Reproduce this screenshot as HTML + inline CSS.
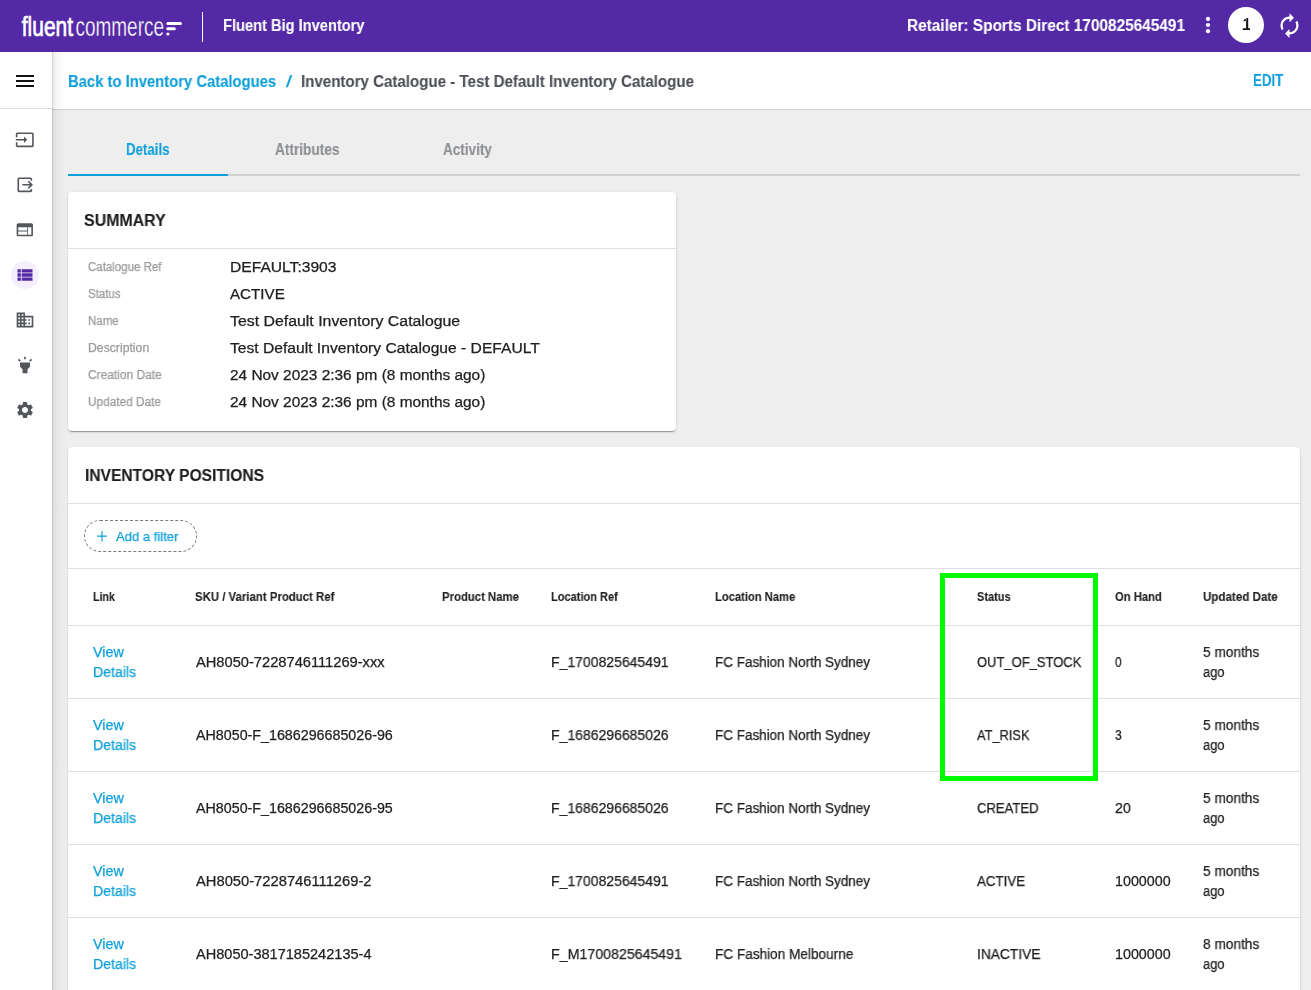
<!DOCTYPE html>
<html><head><meta charset="utf-8">
<style>
*{box-sizing:border-box}
html,body{margin:0;padding:0}
body{width:1311px;height:990px;overflow:hidden;position:relative;background:#eeeeee;font-family:"Liberation Sans",sans-serif}
.t{position:absolute;white-space:pre;transform-origin:0 0;display:block;will-change:transform}
#hdr{position:absolute;left:0;top:0;width:1311px;height:52px;background:#5429a6}
#side{position:absolute;left:0;top:52px;width:52px;height:938px;background:#fff;z-index:3}
#crumb{position:absolute;left:52px;top:52px;width:1259px;height:58px;background:#fff;border-bottom:1px solid #d4d4d4}
.card{position:absolute;background:#fff;border-radius:4px;box-shadow:0 2px 1px -1px rgba(0,0,0,.2),0 1px 1px 0 rgba(0,0,0,.14),0 1px 3px 0 rgba(0,0,0,.12)}
.hl{position:absolute;height:1px;background:#e0e0e0}
svg{position:absolute;overflow:visible}
</style></head><body>
<div id="hdr"></div>
<div id="crumb"></div>
<div id="side">
  <div style="position:absolute;left:0;top:56px;width:52px;height:1px;background:#e0e0e0"></div>
</div>
<!-- tabs underline -->
<div style="position:absolute;left:68px;top:174px;width:1232px;height:2px;background:#d0d0d0"></div>
<div style="position:absolute;left:68px;top:174px;width:160px;height:2px;background:#0e9fdb"></div>
<!-- summary card -->
<div class="card" style="left:68px;top:192px;width:608px;height:239px">
  <div class="hl" style="left:0;top:56px;width:608px"></div>
</div>
<!-- inventory card -->
<div class="card" style="left:68px;top:447px;width:1232px;height:600px">
  <div class="hl" style="left:0;top:56px;width:1232px"></div>
  <div class="hl" style="left:0;top:121px;width:1232px"></div>
  <div class="hl" style="left:0;top:178px;width:1232px"></div>
  <div class="hl" style="left:0;top:251px;width:1232px"></div>
  <div class="hl" style="left:0;top:324px;width:1232px"></div>
  <div class="hl" style="left:0;top:397px;width:1232px"></div>
  <div class="hl" style="left:0;top:470px;width:1232px"></div>
  <div style="position:absolute;left:16px;top:73px;width:113px;height:32px;border:1px dashed #7a7a7a;border-radius:16px"></div>
</div>

<div style="position:absolute;left:52px;top:52px;width:16px;height:938px;z-index:4;background:linear-gradient(to right,rgba(0,0,0,.17) 0px,rgba(0,0,0,.17) 1px,rgba(0,0,0,.07) 1.5px,rgba(0,0,0,.045) 4px,rgba(0,0,0,.02) 8px,rgba(0,0,0,0) 14px)"></div>
<!-- logo -->
<svg style="left:0;top:0" width="200" height="52" viewBox="0 0 200 52">
  <text x="21.8" y="36" fill="#fff" stroke="#fff" stroke-width="0.7" font-family="Liberation Sans" font-weight="400" font-size="27" textLength="51.3" lengthAdjust="spacingAndGlyphs">fluent</text>
  <text x="75.5" y="36" fill="#fff" font-family="Liberation Sans" font-weight="400" font-size="27" stroke="#5429a6" stroke-width="0.35" textLength="88.5" lengthAdjust="spacingAndGlyphs">commerce</text>
  <rect x="166.3" y="22" width="15.7" height="3" rx="1.5" fill="#fff"/>
  <rect x="166.3" y="27.2" width="9.5" height="3" rx="1.5" fill="#fff"/>
  <circle cx="167.9" cy="34" r="1.6" fill="#fff"/>
</svg>
<div style="position:absolute;left:202px;top:12px;width:1.2px;height:29.5px;background:#fff"></div>
<!-- kebab -->
<svg style="left:1200px;top:13px" width="16" height="24"><circle cx="8" cy="5.9" r="2.1" fill="#fff"/><circle cx="8" cy="12" r="2.1" fill="#fff"/><circle cx="8" cy="18.2" r="2.1" fill="#fff"/></svg>
<div style="position:absolute;left:1228px;top:7px;width:36px;height:36px;border-radius:50%;background:#fff"></div>
<svg style="left:0;top:0" width="1311" height="52"><path fill="#151515" d="M1246.1 18.1h2.1v10.5h-2.1z M1246.3 18.1l-3 2.3 0.8 1.2 2.6-1.6z M1242.8 28.3h7.2v1.7h-7.2z"/></svg>
<!-- sync -->
<svg style="left:1275.7px;top:12.1px" width="27" height="27" viewBox="0 0 24 24"><path fill="#fff" d="M12 6v3l4-4-4-4v3c-4.42 0-8 3.58-8 8 0 1.57.46 3.03 1.24 4.26L6.7 14.8c-.45-.83-.7-1.79-.7-2.8 0-3.31 2.69-6 6-6zm6.76 1.74L17.3 9.2c.44.84.7 1.79.7 2.8 0 3.31-2.69 6-6 6v-3l-4 4 4 4v-3c4.42 0 8-3.58 8-8 0-1.57-.46-3.03-1.24-4.26z"/></svg>
<!-- hamburger -->
<div style="position:absolute;left:16px;top:75px;width:18px;height:2px;background:#111;z-index:6"></div>
<div style="position:absolute;left:16px;top:80px;width:18px;height:2px;background:#111;z-index:6"></div>
<div style="position:absolute;left:16px;top:85px;width:18px;height:2px;background:#111;z-index:6"></div>
<!-- sidebar icons -->
<svg style="left:15.3px;top:130px;z-index:6" width="19.6" height="19.6" viewBox="0 0 24 24"><path fill="#53575c" d="M21 3.01H3c-1.1 0-2 .9-2 2V9h2V4.99h18v14.03H3V15H1v4.01c0 1.1.9 1.98 2 1.98h18c1.1 0 2-.88 2-1.98v-14c0-1.11-.9-2-2-2zM11 16l4-4-4-4v3H1v2h10v3z"/></svg>
<svg style="left:15.3px;top:175px;z-index:6" width="19.6" height="19.6" viewBox="0 0 24 24"><path fill="#53575c" d="M17 17l5-5-5-5-1.41 1.41L18.17 11H9v2h9.17l-2.58 2.59z M19 19H5V5h14v2h2V5c0-1.1-.89-2-2-2H5c-1.1 0-2 .9-2 2v14c0 1.1.9 2 2 2h14c1.11 0 2-.9 2-2v-2h-2v2z"/></svg>
<svg style="left:15.3px;top:220px;z-index:6" width="19.6" height="19.6" viewBox="0 0 24 24"><path fill="#53575c" d="M20 4H4c-1.1 0-1.99.9-1.99 2L2 18c0 1.1.9 2 2 2h16c1.1 0 2-.9 2-2V6c0-1.1-.9-2-2-2zm-5 14H4v-4h11v4zm0-5H4V9h11v4zm5 5h-4V9h4v9z"/></svg>
<div style="position:absolute;left:11px;top:261px;width:28px;height:28px;border-radius:50%;background:#f5eefd;z-index:6"></div>
<svg style="left:15px;top:265px;z-index:7" width="20" height="20" viewBox="0 0 24 24"><path fill="#5429a6" d="M3 14h4v-4H3v4zm0 5h4v-4H3v4zM3 9h4V5H3v4zm5 5h13v-4H8v4zm0 5h13v-4H8v4zM8 5v4h13V5H8z"/></svg>
<svg style="left:15px;top:310px;z-index:6" width="20" height="20" viewBox="0 0 24 24"><path fill="#53575c" d="M12 7V3H2v18h20V7H12zM6 19H4v-2h2v2zm0-4H4v-2h2v2zm0-4H4V9h2v2zm0-4H4V5h2v2zm4 12H8v-2h2v2zm0-4H8v-2h2v2zm0-4H8V9h2v2zm0-4H8V5h2v2zm10 12h-8v-2h2v-2h-2v-2h2v-2h-2V9h8v10zm-2-8h-2v2h2v-2zm0 4h-2v2h2v-2z"/></svg>
<svg style="left:15px;top:355px;z-index:6" width="20" height="20" viewBox="0 0 24 24"><path fill="#53575c" d="M6 14l3 3v5h6v-5l3-3V9H6zm5-12h2v3h-2zM3.5 5.875L4.914 4.46l2.12 2.122L5.62 7.997zm13.46.71l2.123-2.12 1.414 1.414L18.375 8z"/></svg>
<svg style="left:15px;top:400px;z-index:6" width="20" height="20" viewBox="0 0 24 24"><path fill="#53575c" d="M19.14 12.94c.04-.3.06-.61.06-.94 0-.32-.02-.64-.07-.94l2.03-1.58c.18-.14.23-.41.12-.61l-1.92-3.32c-.12-.22-.37-.29-.59-.22l-2.39.96c-.5-.38-1.03-.7-1.62-.94l-.36-2.54c-.04-.24-.24-.41-.48-.41h-3.84c-.24 0-.43.17-.47.41l-.36 2.54c-.59.24-1.13.57-1.62.94l-2.39-.96c-.22-.08-.47 0-.59.22L2.74 8.87c-.12.21-.08.47.12.61l2.03 1.58c-.05.3-.09.63-.09.94s.02.64.07.94l-2.03 1.58c-.18.14-.23.41-.12.61l1.92 3.32c.12.22.37.29.59.22l2.39-.96c.5.38 1.03.7 1.62.94l.36 2.54c.05.24.24.41.48.41h3.84c.24 0 .44-.17.47-.41l.36-2.54c.59-.24 1.13-.56 1.62-.94l2.39.96c.22.08.47 0 .59-.22l1.92-3.32c.12-.22.07-.47-.12-.61l-2.01-1.58zM12 15.6c-1.98 0-3.6-1.62-3.6-3.6s1.62-3.6 3.6-3.6 3.6 1.62 3.6 3.6-1.62 3.6-3.6 3.6z"/></svg>
<!-- filter plus -->
<svg style="left:0;top:520px;z-index:6" width="200" height="32"><path d="M97 16.2h10M102 11.2v10" stroke="#0e9fdb" stroke-width="1.2" fill="none"/></svg>
<span class=t style='left:223.0px;top:16.69px;font-size:16.32px;line-height:16.32px;font-weight:700;color:#fff;transform:scaleX(0.8973);-webkit-text-stroke:0.1px #fff'>Fluent Big Inventory</span>
<span class=t style='left:906.8px;top:16.99px;font-size:16.32px;line-height:16.32px;font-weight:700;color:#fff;transform:scaleX(0.9433);-webkit-text-stroke:0.1px #fff'>Retailer: Sports Direct 1700825645491</span>
<span class=t style='left:68.3px;top:72.79px;font-size:16.32px;line-height:16.32px;font-weight:700;color:#0e9fdb;transform:scaleX(0.9074);-webkit-text-stroke:0.1px #0e9fdb'>Back to Inventory Catalogues</span>
<span class=t style='left:285.6px;top:72.79px;font-size:16.32px;line-height:16.32px;font-weight:400;color:#0e9fdb;transform:scaleX(1.3416);-webkit-text-stroke:0.25px #0e9fdb'>/</span>
<span class=t style='left:300.5px;top:72.99px;font-size:16.32px;line-height:16.32px;font-weight:700;color:#4c5056;transform:scaleX(0.9251);-webkit-text-stroke:0.1px #4c5056'>Inventory Catalogue - Test Default Inventory Catalogue</span>
<span class=t style='left:1252.7px;top:72.39px;font-size:16.32px;line-height:16.32px;font-weight:700;color:#0e9fdb;transform:scaleX(0.8124);-webkit-text-stroke:0.1px #0e9fdb'>EDIT</span>
<span class=t style='left:125.8px;top:141.29px;font-size:16.32px;line-height:16.32px;font-weight:700;color:#0e9fdb;transform:scaleX(0.8131);-webkit-text-stroke:0.1px #0e9fdb'>Details</span>
<span class=t style='left:275.4px;top:141.29px;font-size:16.32px;line-height:16.32px;font-weight:700;color:#8b8e92;transform:scaleX(0.8360);-webkit-text-stroke:0.1px #8b8e92'>Attributes</span>
<span class=t style='left:443.0px;top:141.29px;font-size:16.32px;line-height:16.32px;font-weight:700;color:#8b8e92;transform:scaleX(0.8297);-webkit-text-stroke:0.1px #8b8e92'>Activity</span>
<span class=t style='left:83.8px;top:211.89px;font-size:16.32px;line-height:16.32px;font-weight:700;color:#1c1c1c;transform:scaleX(0.9774);-webkit-text-stroke:0.1px #1c1c1c'>SUMMARY</span>
<span class=t style='left:87.8px;top:261.34px;font-size:12.24px;line-height:12.24px;font-weight:400;color:#9a9a9a;transform:scaleX(0.9397);-webkit-text-stroke:0.25px #9a9a9a'>Catalogue Ref</span>
<span class=t style='left:230.0px;top:259.61px;font-size:14.28px;line-height:14.28px;font-weight:400;color:#212121;transform:scaleX(1.0949);-webkit-text-stroke:0.25px #212121'>DEFAULT:3903</span>
<span class=t style='left:87.8px;top:288.34px;font-size:12.24px;line-height:12.24px;font-weight:400;color:#9a9a9a;transform:scaleX(0.9398);-webkit-text-stroke:0.25px #9a9a9a'>Status</span>
<span class=t style='left:230.0px;top:286.61px;font-size:14.28px;line-height:14.28px;font-weight:400;color:#212121;transform:scaleX(1.0634);-webkit-text-stroke:0.25px #212121'>ACTIVE</span>
<span class=t style='left:87.8px;top:315.34px;font-size:12.24px;line-height:12.24px;font-weight:400;color:#9a9a9a;transform:scaleX(0.9405);-webkit-text-stroke:0.25px #9a9a9a'>Name</span>
<span class=t style='left:230.0px;top:313.61px;font-size:14.28px;line-height:14.28px;font-weight:400;color:#212121;transform:scaleX(1.1122);-webkit-text-stroke:0.25px #212121'>Test Default Inventory Catalogue</span>
<span class=t style='left:87.8px;top:342.34px;font-size:12.24px;line-height:12.24px;font-weight:400;color:#9a9a9a;transform:scaleX(0.9983);-webkit-text-stroke:0.25px #9a9a9a'>Description</span>
<span class=t style='left:230.0px;top:340.61px;font-size:14.28px;line-height:14.28px;font-weight:400;color:#212121;transform:scaleX(1.0955);-webkit-text-stroke:0.25px #212121'>Test Default Inventory Catalogue - DEFAULT</span>
<span class=t style='left:87.8px;top:369.34px;font-size:12.24px;line-height:12.24px;font-weight:400;color:#9a9a9a;transform:scaleX(0.9762);-webkit-text-stroke:0.25px #9a9a9a'>Creation Date</span>
<span class=t style='left:230.0px;top:367.61px;font-size:14.28px;line-height:14.28px;font-weight:400;color:#212121;transform:scaleX(1.0803);-webkit-text-stroke:0.25px #212121'>24 Nov 2023 2:36 pm (8 months ago)</span>
<span class=t style='left:87.8px;top:396.34px;font-size:12.24px;line-height:12.24px;font-weight:400;color:#9a9a9a;transform:scaleX(0.9656);-webkit-text-stroke:0.25px #9a9a9a'>Updated Date</span>
<span class=t style='left:230.0px;top:394.61px;font-size:14.28px;line-height:14.28px;font-weight:400;color:#212121;transform:scaleX(1.0803);-webkit-text-stroke:0.25px #212121'>24 Nov 2023 2:36 pm (8 months ago)</span>
<span class=t style='left:84.5px;top:467.19px;font-size:16.32px;line-height:16.32px;font-weight:700;color:#1c1c1c;transform:scaleX(0.9555);-webkit-text-stroke:0.1px #1c1c1c'>INVENTORY POSITIONS</span>
<span class=t style='left:115.5px;top:529.68px;font-size:13.26px;line-height:13.26px;font-weight:400;color:#0e9fdb;transform:scaleX(0.9851);-webkit-text-stroke:0.25px #0e9fdb'>Add a filter</span>
<span class=t style='left:92.9px;top:591.04px;font-size:12.24px;line-height:12.24px;font-weight:700;color:#212121;transform:scaleX(0.8706);-webkit-text-stroke:0.1px #212121'>Link</span>
<span class=t style='left:195.2px;top:591.04px;font-size:12.24px;line-height:12.24px;font-weight:700;color:#212121;transform:scaleX(0.9321);-webkit-text-stroke:0.1px #212121'>SKU / Variant Product Ref</span>
<span class=t style='left:441.7px;top:591.04px;font-size:12.24px;line-height:12.24px;font-weight:700;color:#212121;transform:scaleX(0.9270);-webkit-text-stroke:0.1px #212121'>Product Name</span>
<span class=t style='left:551.0px;top:591.04px;font-size:12.24px;line-height:12.24px;font-weight:700;color:#212121;transform:scaleX(0.9016);-webkit-text-stroke:0.1px #212121'>Location Ref</span>
<span class=t style='left:714.7px;top:591.04px;font-size:12.24px;line-height:12.24px;font-weight:700;color:#212121;transform:scaleX(0.9144);-webkit-text-stroke:0.1px #212121'>Location Name</span>
<span class=t style='left:977.1px;top:591.04px;font-size:12.24px;line-height:12.24px;font-weight:700;color:#212121;transform:scaleX(0.9013);-webkit-text-stroke:0.1px #212121'>Status</span>
<span class=t style='left:1114.5px;top:591.04px;font-size:12.24px;line-height:12.24px;font-weight:700;color:#212121;transform:scaleX(0.9179);-webkit-text-stroke:0.1px #212121'>On Hand</span>
<span class=t style='left:1203.3px;top:591.04px;font-size:12.24px;line-height:12.24px;font-weight:700;color:#212121;transform:scaleX(0.9473);-webkit-text-stroke:0.1px #212121'>Updated Date</span>
<span class=t style='left:92.7px;top:644.91px;font-size:14.28px;line-height:14.28px;font-weight:400;color:#0e9fdb;transform:scaleX(1.0042);-webkit-text-stroke:0.25px #0e9fdb'>View</span>
<span class=t style='left:92.7px;top:664.91px;font-size:14.28px;line-height:14.28px;font-weight:400;color:#0e9fdb;transform:scaleX(0.9860);-webkit-text-stroke:0.25px #0e9fdb'>Details</span>
<span class=t style='left:195.5px;top:654.91px;font-size:14.28px;line-height:14.28px;font-weight:400;color:#212121;transform:scaleX(1.0279);-webkit-text-stroke:0.25px #212121'>AH8050-7228746111269-xxx</span>
<span class=t style='left:551.2px;top:654.91px;font-size:14.28px;line-height:14.28px;font-weight:400;color:#212121;transform:scaleX(0.9817);-webkit-text-stroke:0.25px #212121'>F_1700825645491</span>
<span class=t style='left:714.5px;top:654.91px;font-size:14.28px;line-height:14.28px;font-weight:400;color:#212121;transform:scaleX(0.9444);-webkit-text-stroke:0.25px #212121'>FC Fashion North Sydney</span>
<span class=t style='left:976.9px;top:654.91px;font-size:14.28px;line-height:14.28px;font-weight:400;color:#212121;transform:scaleX(0.9103);-webkit-text-stroke:0.25px #212121'>OUT_OF_STOCK</span>
<span class=t style='left:1114.8px;top:654.91px;font-size:14.28px;line-height:14.28px;font-weight:400;color:#212121;transform:scaleX(0.8189);-webkit-text-stroke:0.25px #212121'>0</span>
<span class=t style='left:1203.1px;top:644.91px;font-size:14.28px;line-height:14.28px;font-weight:400;color:#212121;transform:scaleX(0.9593);-webkit-text-stroke:0.25px #212121'>5 months</span>
<span class=t style='left:1203.1px;top:664.91px;font-size:14.28px;line-height:14.28px;font-weight:400;color:#212121;transform:scaleX(0.9071);-webkit-text-stroke:0.25px #212121'>ago</span>
<span class=t style='left:92.7px;top:717.91px;font-size:14.28px;line-height:14.28px;font-weight:400;color:#0e9fdb;transform:scaleX(1.0042);-webkit-text-stroke:0.25px #0e9fdb'>View</span>
<span class=t style='left:92.7px;top:737.91px;font-size:14.28px;line-height:14.28px;font-weight:400;color:#0e9fdb;transform:scaleX(0.9860);-webkit-text-stroke:0.25px #0e9fdb'>Details</span>
<span class=t style='left:195.5px;top:727.91px;font-size:14.28px;line-height:14.28px;font-weight:400;color:#212121;transform:scaleX(1.0004);-webkit-text-stroke:0.25px #212121'>AH8050-F_1686296685026-96</span>
<span class=t style='left:551.2px;top:727.91px;font-size:14.28px;line-height:14.28px;font-weight:400;color:#212121;transform:scaleX(0.9817);-webkit-text-stroke:0.25px #212121'>F_1686296685026</span>
<span class=t style='left:714.5px;top:727.91px;font-size:14.28px;line-height:14.28px;font-weight:400;color:#212121;transform:scaleX(0.9444);-webkit-text-stroke:0.25px #212121'>FC Fashion North Sydney</span>
<span class=t style='left:976.9px;top:727.91px;font-size:14.28px;line-height:14.28px;font-weight:400;color:#212121;transform:scaleX(0.8989);-webkit-text-stroke:0.25px #212121'>AT_RISK</span>
<span class=t style='left:1114.8px;top:727.91px;font-size:14.28px;line-height:14.28px;font-weight:400;color:#212121;transform:scaleX(0.8441);-webkit-text-stroke:0.25px #212121'>3</span>
<span class=t style='left:1203.1px;top:717.91px;font-size:14.28px;line-height:14.28px;font-weight:400;color:#212121;transform:scaleX(0.9593);-webkit-text-stroke:0.25px #212121'>5 months</span>
<span class=t style='left:1203.1px;top:737.91px;font-size:14.28px;line-height:14.28px;font-weight:400;color:#212121;transform:scaleX(0.9071);-webkit-text-stroke:0.25px #212121'>ago</span>
<span class=t style='left:92.7px;top:790.91px;font-size:14.28px;line-height:14.28px;font-weight:400;color:#0e9fdb;transform:scaleX(1.0042);-webkit-text-stroke:0.25px #0e9fdb'>View</span>
<span class=t style='left:92.7px;top:810.91px;font-size:14.28px;line-height:14.28px;font-weight:400;color:#0e9fdb;transform:scaleX(0.9860);-webkit-text-stroke:0.25px #0e9fdb'>Details</span>
<span class=t style='left:195.5px;top:800.91px;font-size:14.28px;line-height:14.28px;font-weight:400;color:#212121;transform:scaleX(1.0004);-webkit-text-stroke:0.25px #212121'>AH8050-F_1686296685026-95</span>
<span class=t style='left:551.2px;top:800.91px;font-size:14.28px;line-height:14.28px;font-weight:400;color:#212121;transform:scaleX(0.9817);-webkit-text-stroke:0.25px #212121'>F_1686296685026</span>
<span class=t style='left:714.5px;top:800.91px;font-size:14.28px;line-height:14.28px;font-weight:400;color:#212121;transform:scaleX(0.9444);-webkit-text-stroke:0.25px #212121'>FC Fashion North Sydney</span>
<span class=t style='left:976.9px;top:800.91px;font-size:14.28px;line-height:14.28px;font-weight:400;color:#212121;transform:scaleX(0.9179);-webkit-text-stroke:0.25px #212121'>CREATED</span>
<span class=t style='left:1114.8px;top:800.91px;font-size:14.28px;line-height:14.28px;font-weight:400;color:#212121;transform:scaleX(0.9890);-webkit-text-stroke:0.25px #212121'>20</span>
<span class=t style='left:1203.1px;top:790.91px;font-size:14.28px;line-height:14.28px;font-weight:400;color:#212121;transform:scaleX(0.9593);-webkit-text-stroke:0.25px #212121'>5 months</span>
<span class=t style='left:1203.1px;top:810.91px;font-size:14.28px;line-height:14.28px;font-weight:400;color:#212121;transform:scaleX(0.9071);-webkit-text-stroke:0.25px #212121'>ago</span>
<span class=t style='left:92.7px;top:863.91px;font-size:14.28px;line-height:14.28px;font-weight:400;color:#0e9fdb;transform:scaleX(1.0042);-webkit-text-stroke:0.25px #0e9fdb'>View</span>
<span class=t style='left:92.7px;top:883.91px;font-size:14.28px;line-height:14.28px;font-weight:400;color:#0e9fdb;transform:scaleX(0.9860);-webkit-text-stroke:0.25px #0e9fdb'>Details</span>
<span class=t style='left:195.5px;top:873.91px;font-size:14.28px;line-height:14.28px;font-weight:400;color:#212121;transform:scaleX(1.0323);-webkit-text-stroke:0.25px #212121'>AH8050-7228746111269-2</span>
<span class=t style='left:551.2px;top:873.91px;font-size:14.28px;line-height:14.28px;font-weight:400;color:#212121;transform:scaleX(0.9817);-webkit-text-stroke:0.25px #212121'>F_1700825645491</span>
<span class=t style='left:714.5px;top:873.91px;font-size:14.28px;line-height:14.28px;font-weight:400;color:#212121;transform:scaleX(0.9444);-webkit-text-stroke:0.25px #212121'>FC Fashion North Sydney</span>
<span class=t style='left:976.9px;top:873.91px;font-size:14.28px;line-height:14.28px;font-weight:400;color:#212121;transform:scaleX(0.9334);-webkit-text-stroke:0.25px #212121'>ACTIVE</span>
<span class=t style='left:1114.8px;top:873.91px;font-size:14.28px;line-height:14.28px;font-weight:400;color:#212121;transform:scaleX(1.0010);-webkit-text-stroke:0.25px #212121'>1000000</span>
<span class=t style='left:1203.1px;top:863.91px;font-size:14.28px;line-height:14.28px;font-weight:400;color:#212121;transform:scaleX(0.9593);-webkit-text-stroke:0.25px #212121'>5 months</span>
<span class=t style='left:1203.1px;top:883.91px;font-size:14.28px;line-height:14.28px;font-weight:400;color:#212121;transform:scaleX(0.9071);-webkit-text-stroke:0.25px #212121'>ago</span>
<span class=t style='left:92.7px;top:936.91px;font-size:14.28px;line-height:14.28px;font-weight:400;color:#0e9fdb;transform:scaleX(1.0042);-webkit-text-stroke:0.25px #0e9fdb'>View</span>
<span class=t style='left:92.7px;top:956.91px;font-size:14.28px;line-height:14.28px;font-weight:400;color:#0e9fdb;transform:scaleX(0.9860);-webkit-text-stroke:0.25px #0e9fdb'>Details</span>
<span class=t style='left:195.5px;top:946.91px;font-size:14.28px;line-height:14.28px;font-weight:400;color:#212121;transform:scaleX(1.0195);-webkit-text-stroke:0.25px #212121'>AH8050-3817185242135-4</span>
<span class=t style='left:551.2px;top:946.91px;font-size:14.28px;line-height:14.28px;font-weight:400;color:#212121;transform:scaleX(0.9949);-webkit-text-stroke:0.25px #212121'>F_M1700825645491</span>
<span class=t style='left:714.5px;top:946.91px;font-size:14.28px;line-height:14.28px;font-weight:400;color:#212121;transform:scaleX(0.9531);-webkit-text-stroke:0.25px #212121'>FC Fashion Melbourne</span>
<span class=t style='left:976.9px;top:946.91px;font-size:14.28px;line-height:14.28px;font-weight:400;color:#212121;transform:scaleX(0.9651);-webkit-text-stroke:0.25px #212121'>INACTIVE</span>
<span class=t style='left:1114.8px;top:946.91px;font-size:14.28px;line-height:14.28px;font-weight:400;color:#212121;transform:scaleX(1.0010);-webkit-text-stroke:0.25px #212121'>1000000</span>
<span class=t style='left:1203.1px;top:936.91px;font-size:14.28px;line-height:14.28px;font-weight:400;color:#212121;transform:scaleX(0.9593);-webkit-text-stroke:0.25px #212121'>8 months</span>
<span class=t style='left:1203.1px;top:956.91px;font-size:14.28px;line-height:14.28px;font-weight:400;color:#212121;transform:scaleX(0.9071);-webkit-text-stroke:0.25px #212121'>ago</span>
<!-- green box -->
<div style="position:absolute;left:940px;top:573px;width:158px;height:208px;border:5px solid #00fa00;z-index:5"></div>
</body></html>
